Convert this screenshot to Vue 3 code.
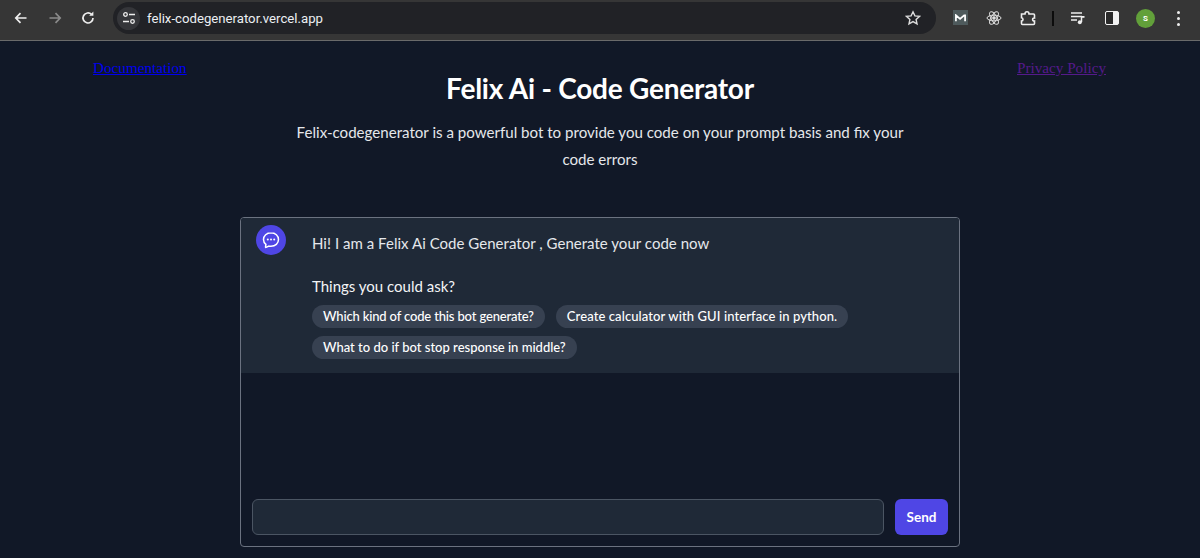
<script setup>
const chips = [
  'Which kind of code this bot generate?',
  'Create calculator with GUI interface in python.',
  'What to do if bot stop response in middle?'
]
</script>

<template>
  <div class="page">
    <header class="toolbar">
      <div class="nav">
        <svg class="ico" viewBox="0 0 16 16"><path d="M13.500 8H3M7.500 3.200 2.800 8l4.700 4.800" fill="none" stroke="#eee" stroke-width="1.700"/></svg>
        <svg class="ico" viewBox="0 0 16 16"><path d="M2.500 8H13M8.500 3.200 13.200 8l-4.700 4.800" fill="none" stroke="#8a8a8a" stroke-width="1.700"/></svg>
        <svg class="ico" viewBox="0 0 16 16"><path d="M13 8a5 5 0 1 1-1.500-3.600" fill="none" stroke="#eee" stroke-width="1.700"/><path d="M13.400 1.600v4.200H9.200z" fill="#eee"/></svg>
      </div>
      <div class="omni">
        <span class="tune">
          <svg viewBox="0 0 14 14" width="14" height="14"><circle cx="3.500" cy="3.500" r="1.800" fill="none" stroke="#eee" stroke-width="1.300"/><path d="M7 3.500h6M1 10.500h6" stroke="#eee" stroke-width="1.500"/><circle cx="10.500" cy="10.500" r="1.800" fill="none" stroke="#eee" stroke-width="1.300"/></svg>
        </span>
        <span class="url">felix-codegenerator.vercel.app</span>
        <svg class="star" viewBox="0 0 16 16"><path d="m8 1.800 1.900 4.100 4.500.5-3.300 3 .9 4.400L8 11.600l-4 2.200.9-4.400-3.300-3 4.500-.5z" fill="none" stroke="#ddd" stroke-width="1.400"/></svg>
      </div>
      <div class="exts">
        <span class="mext"><svg viewBox="0 0 12 8" width="11" height="8"><path d="M1 7.500V1l4.500 4L10 1h1v6.500" fill="none" stroke="#fff" stroke-width="1.900"/></svg></span>
        <svg class="ext react" viewBox="0 0 16 16" fill="none" stroke="#ddd" stroke-width="1">
          <ellipse cx="8" cy="8" rx="7" ry="2.800"/>
          <ellipse cx="8" cy="8" rx="7" ry="2.800" transform="rotate(60 8 8)"/>
          <ellipse cx="8" cy="8" rx="7" ry="2.800" transform="rotate(120 8 8)"/>
          <circle cx="8" cy="8" r="1.300" fill="#ddd"/>
        </svg>
        <svg class="ext puzzle" viewBox="0 0 16 16"><path d="M1.500 4H5c0-3 4-3 4 0h4.500c.5 0 1 .4 1 1v3c-2.500-.5-2.500 3.500 0 3v2.500c0 .5-.5 1-1 1H2.500c-.5 0-1-.5-1-1V11c2-.2 2-3 0-3.200z" fill="none" stroke="#eee" stroke-width="1.600"/></svg>
        <span class="divider"></span>
        <svg class="ext media" viewBox="0 0 16 16"><path d="M1 3h11M1 6.500h11M1 10h6" stroke="#eee" stroke-width="1.500"/><path d="M11.500 6.500V12" stroke="#eee" stroke-width="1.500"/><circle cx="9.800" cy="12.300" r="2" fill="#eee"/><path d="M11 6h3.500v1.800H11z" fill="#eee"/></svg>
        <span class="side"><span></span></span>
        <span class="avatar">S</span>
        <span class="dots"><i></i><i></i><i></i></span>
      </div>
    </header>

    <main class="content">
      <div class="links">
        <a href="#doc" class="doc">Documentation</a>
        <a href="#privacy" class="priv">Privacy Policy</a>
      </div>
      <h1>Felix Ai - Code Generator</h1>
      <p class="sub">Felix-codegenerator is a powerful bot to provide you code on your prompt basis and fix your code errors</p>

      <section class="card">
        <div class="welcome">
          <span class="bot">
            <svg viewBox="0 0 20 20" width="20" height="20"><path d="M10 2.800c-4.300 0-7.500 2.900-7.500 6.700 0 2 .9 3.700 2.400 4.900l-.4 2.600c0 .3.300.5.500.4l3-1.300c.7.200 1.400.2 2 .2 4.300 0 7.500-2.900 7.500-6.800S14.300 2.800 10 2.800z" fill="none" stroke="#fff" stroke-width="1.500"/><circle cx="6.800" cy="9.600" r="1" fill="#fff"/><circle cx="10" cy="9.600" r="1" fill="#fff"/><circle cx="13.200" cy="9.600" r="1" fill="#fff"/></svg>
          </span>
          <div class="msg">
            <p class="hi">Hi! I am a Felix Ai Code Generator , Generate your code now</p>
            <p class="things">Things you could ask?</p>
            <div class="chips">
              <button v-for="c in chips" :key="c" class="chip">{{ c }}</button>
            </div>
          </div>
        </div>
        <div class="spacer"></div>
        <form class="composer" @submit.prevent>
          <input class="field" type="text" />
          <button class="send">Send</button>
        </form>
      </section>
    </main>
  </div>
</template>

<style>
html, body { margin: 0; background: #111827; }
</style>

<style scoped>
.page { width: 1200px; height: 558px; overflow: hidden; background: #111827; display: flex; flex-direction: column; font-family: "Lato", "Noto Sans", sans-serif; }

.toolbar { height: 41px; box-sizing: border-box; flex: none; background: #363636; border-bottom: 1px solid #6a6a6a; padding-bottom: 4px; display: flex; align-items: center; }
.nav { display: flex; align-items: center; gap: 17.500px; padding-left: 13px; width: 113px; box-sizing: border-box; }
.ico { width: 16px; height: 16px; flex: none; }
.omni { width: 823px; height: 32px; background: #212226; border-radius: 16px; display: flex; align-items: center; flex: none; }
.tune { width: 23px; height: 23px; margin-left: 4px; border-radius: 50%; background: #35363a; display: flex; align-items: center; justify-content: center; flex: none; }
.url { margin-left: 7px; color: #eceff3; font-family: "Roboto", sans-serif; font-size: 13.200px; flex: 1; }
.star { width: 16px; height: 16px; margin-right: 15px; flex: none; }
.exts { position: relative; flex: 1; height: 36px; }
.exts > * { position: absolute; }
.mext { left: 17px; top: 10px; width: 15px; height: 15px; background: #4e5a5c; display: flex; align-items: center; justify-content: center; }
.ext { width: 16px; height: 16px; }
.react { left: 50px; top: 10px; }
.puzzle { left: 84px; top: 10px; }
.divider { left: 116px; top: 11px; width: 2px; height: 15px; background: #0c0c0c; }
.media { left: 134px; top: 10px; }
.side { left: 169px; top: 11px; width: 14px; height: 14px; box-sizing: border-box; border: 1.500px solid #f2f2f2; border-radius: 2px; background: #f2f2f2; overflow: hidden; }
.side span { display: block; width: 7px; height: 100%; background: #2a2a2a; }
.avatar { left: 200px; top: 9px; width: 19px; height: 19px; border-radius: 50%; background: #62a03a; color: #fff; font: 700 8px/19px "Roboto", sans-serif; text-align: center; }
.dots { left: 241px; top: 11px; display: flex; flex-direction: column; gap: 3px; }
.dots i { display: block; width: 3px; height: 3px; border-radius: 50%; background: #eee; }

.content { flex: 1; position: relative; display: flex; flex-direction: column; align-items: center; }
.links { position: absolute; left: 93px; right: 94px; top: 18px; display: flex; justify-content: space-between; font: 15.200px/18px "Liberation Serif", serif; }
.doc { color: #0000ee; }
.priv { color: #551a8b; }
h1 { margin: 30px 0 0; color: #fff; font-size: 28px; line-height: 34px; font-weight: 700; letter-spacing: -0.230px; }
.sub { margin: 14px 0 0; width: 620px; text-align: center; color: #e5e7eb; font-size: 15.100px; line-height: 27px; }

.card { margin-top: 44px; width: 720px; height: 330px; box-sizing: border-box; border: 1px solid #6b7280; border-radius: 4px; display: flex; flex-direction: column; overflow: hidden; }
.welcome { height: 155px; flex: none; box-sizing: border-box; background: #1f2937; display: flex; padding: 7px 0 0 15px; }
.bot { width: 30px; height: 30px; border-radius: 50%; background: #4f46e5; display: flex; align-items: center; justify-content: center; flex: none; }
.msg { margin-left: 26px; width: 560px; }
.hi { margin: 8px 0 0; color: #e5e7eb; font-size: 15px; line-height: 20px; letter-spacing: 0.030px; }
.things { margin: 22px 0 0; color: #f3f4f6; font-size: 15px; line-height: 22px; }
.chips { margin-top: 8px; display: flex; flex-wrap: wrap; gap: 8px 11px; }
.chip { height: 23px; padding: 0 11px; border: 0; border-radius: 12px; background: #374151; color: #fff; font: 500 13px/23px "Lato", sans-serif; }
.chip:nth-child(1) { letter-spacing: -0.160px; }
.chip:nth-child(2) { letter-spacing: 0.100px; }
.spacer { flex: 1; }
.composer { display: flex; align-items: center; gap: 11px; padding: 0 11px 11px; }
.field { flex: 1; height: 36px; box-sizing: border-box; background: #1f2937; border: 1px solid #4b5563; border-radius: 6px; }
.send { width: 53px; height: 36px; border: 0; border-radius: 6px; background: #4f46e5; color: #fff; font: 700 13.500px "Lato", sans-serif; }
</style>
